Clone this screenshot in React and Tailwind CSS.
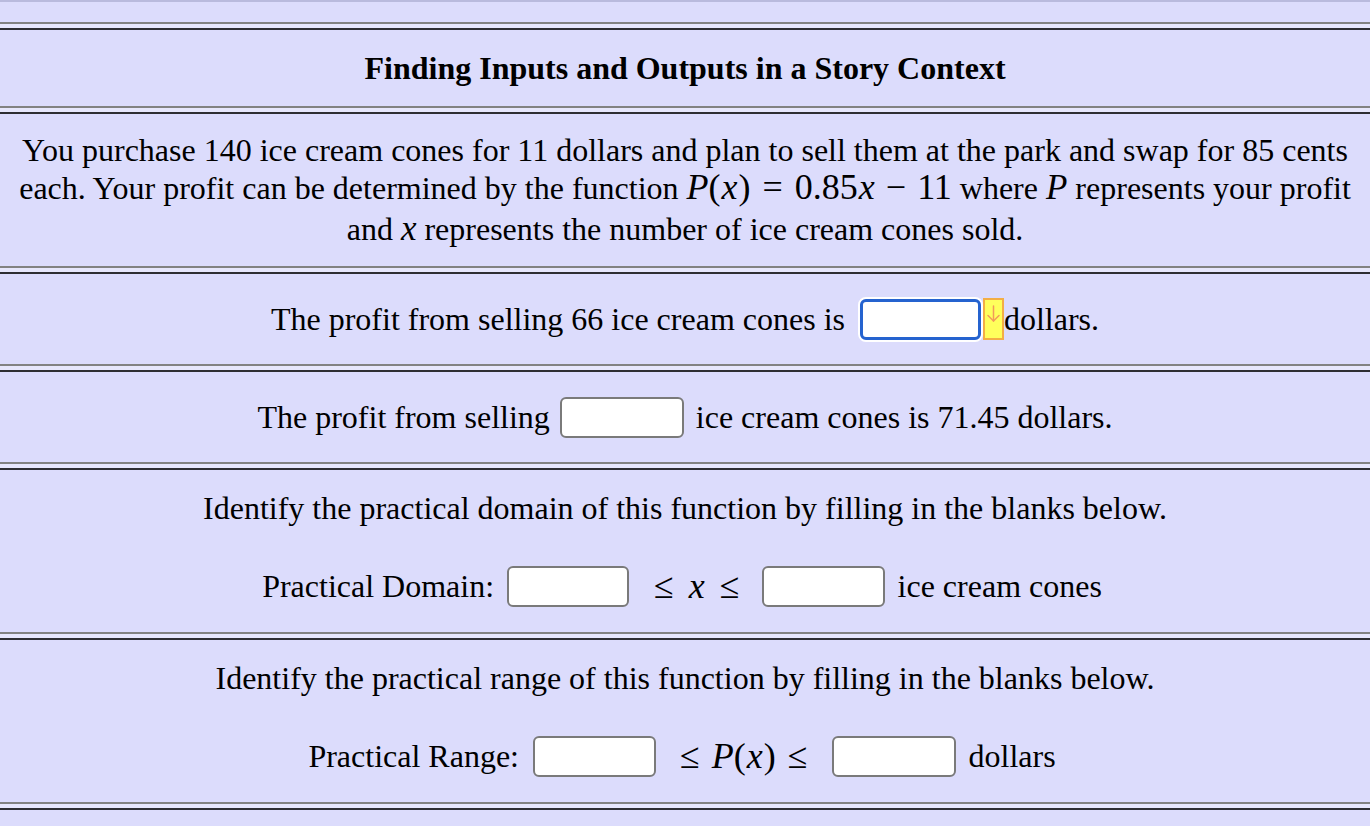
import React from "react";

function Sep() {
  return (
    <div className="flex flex-col">
      <div className="h-[2px] bg-[#828282]" />
      <div className="h-[4px] bg-[#e7e7fc]" />
      <div className="h-[2px] bg-[#2e2e32]" />
    </div>
  );
}

function Box({ w = "w-[123px]" }) {
  return <div className={`${w} h-[41px] shrink-0 rounded-[6px] border-2 border-[#7a7a7a] bg-white`} />;
}

const M = ({ children }) => <span className="italic">{children}</span>;

export default function App() {
  return (
    <div
      className="min-h-[826px] w-full bg-[#dcdcfc] text-[32px] leading-[37px] text-black"
      style={{ fontFamily: '"Liberation Serif", "Times New Roman", serif' }}
    >
      <div className="h-[2px] bg-[#b9badd]" />
      <div className="h-[20px]" />
      <Sep />
      <div className="flex h-[76px] items-center justify-center font-bold">
        Finding Inputs and Outputs in a Story Context
      </div>
      <Sep />
      <div className="flex h-[152px] flex-col items-center justify-center whitespace-nowrap">
        <div>You purchase 140 ice cream cones for 11 dollars and plan to sell them at the park and swap for 85 cents</div>
        <div>
          each. Your profit can be determined by the function{" "}
          <span className="text-[36px]">
            <M>P</M>(<span className="mx-[1px] italic">x</span>)
            <span className="mx-[12px]">=</span>0.85<span className="ml-[1px] italic">x</span>
            <span className="mx-[11px]">−</span>11
          </span>{" "}
          where <span className="text-[35px] italic">P</span> represents your profit
        </div>
        <div className="mt-[3px]">
          and <span className="text-[35px] italic">x</span> represents the number of ice cream cones sold.
        </div>
      </div>
      <Sep />
      <div className="flex h-[90px] items-center justify-center whitespace-nowrap">
        <span>The profit from selling 66 ice cream cones is</span>
        <div className="ml-[13px] h-[45px] w-[125px] shrink-0 rounded-[8px] border-2 border-white">
          <div className="h-full w-full rounded-[6px] border-[3px] border-[#2563cf] bg-white" />
        </div>
        <div className="flex h-[42px] w-[21px] shrink-0 justify-center border-2 border-[#f3ae45] bg-[#ffff5c] pt-[4px]">
          <svg width="15" height="20" viewBox="0 0 15 20" fill="none" stroke="#f29a5a" strokeWidth="1.5" strokeLinecap="round">
            <path d="M7.5 2 V17" />
            <path d="M2 11.5 L7.5 17 L13 11.5" />
          </svg>
        </div>
        <span>dollars.</span>
      </div>
      <Sep />
      <div className="flex h-[90px] items-center justify-center whitespace-nowrap">
        <span>The profit from selling</span>
        <div className="ml-[10px] mr-[12px]">
          <Box w="w-[124px]" />
        </div>
        <span>ice cream cones is 71.45 dollars.</span>
      </div>
      <Sep />
      <div className="flex h-[162px] flex-col items-center whitespace-nowrap pt-[20px]">
        <div>Identify the practical domain of this function by filling in the blanks below.</div>
        <div className="mt-[39px] flex h-[41px] items-center">
          <span>Practical Domain:</span>
          <div className="ml-[13px]">
            <Box w="w-[122px]" />
          </div>
          <span className="ml-[25px] text-[36px]">≤</span>
          <span className="ml-[15px] text-[36px] italic">x</span>
          <span className="ml-[15px] text-[36px]">≤</span>
          <div className="ml-[22px]">
            <Box w="w-[123px]" />
          </div>
          <span className="ml-[13px] mr-[6px]">ice cream cones</span>
        </div>
      </div>
      <Sep />
      <div className="flex h-[162px] flex-col items-center whitespace-nowrap pt-[20px]">
        <div>Identify the practical range of this function by filling in the blanks below.</div>
        <div className="mt-[39px] flex h-[41px] items-center">
          <span>Practical Range:</span>
          <div className="ml-[14px]">
            <Box w="w-[123px]" />
          </div>
          <span className="ml-[24px] text-[36px]">≤</span>
          <span className="ml-[12px] text-[36px]">
            <M>P</M>(<span className="mx-[1px] italic">x</span>)
          </span>
          <span className="ml-[12px] text-[36px]">≤</span>
          <div className="ml-[24px]">
            <Box w="w-[124px]" />
          </div>
          <span className="ml-[13px] mr-[6px]">dollars</span>
        </div>
      </div>
      <Sep />
      <div className="h-[16px]" />
    </div>
  );
}
